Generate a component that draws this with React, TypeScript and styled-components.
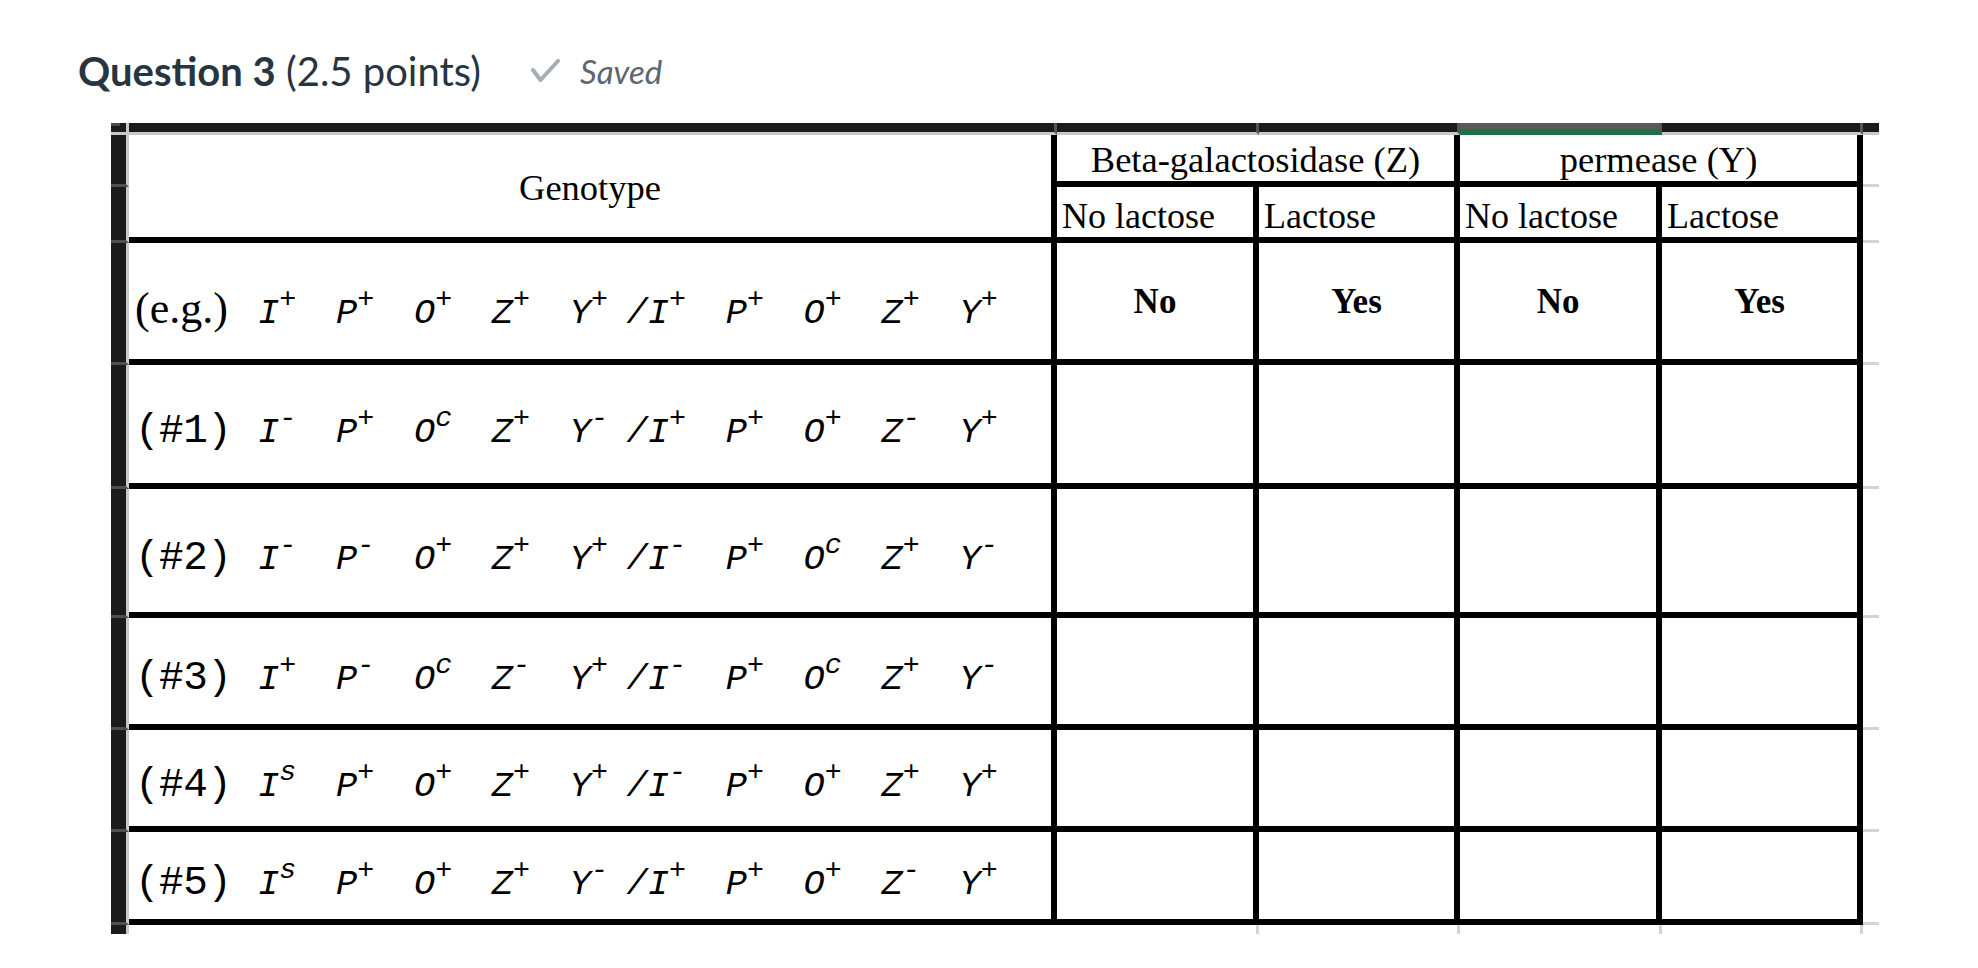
import React from "react";
import styled, { createGlobalStyle } from "styled-components";

const GlobalStyle = createGlobalStyle`
  html, body {
    margin: 0;
    padding: 0;
    background: #ffffff;
  }
  body {
    font-family: Lato, "Noto Sans", sans-serif;
    color: #273540;
  }
`;

const Page = styled.div`
  padding: 52px 0 40px 78px;
`;

const QuestionHeader = styled.header`
  display: flex;
  align-items: center;
  height: 38px;
`;

const Title = styled.h2`
  margin: 0;
  font-size: 40px;
  line-height: 38px;
  font-weight: 400;
  color: #273540;
`;

const Strong = styled.strong`
  font-weight: 700;
`;

const SavedStatus = styled.span`
  display: flex;
  align-items: center;
  gap: 20px;
  margin-left: 50px;
  font-size: 33px;
  font-style: italic;
  color: #5b6670;
`;

// ---- spreadsheet chrome ----

const Sheet = styled.div`
  margin: 33px 0 0 33px;
  display: grid;
  grid-template-columns: 18px auto;
  grid-template-rows: 12px auto;
  width: max-content;
`;

const Corner = styled.div`
  box-sizing: border-box;
  border-right: 3px solid #c9c9c9;
  border-bottom: 3px solid #c9c9c9;
  background: linear-gradient(#4a4a4a, #4a4a4a) 0 0 / 9px 3px no-repeat, #1b1b1b;
`;

const ColumnBar = styled.div`
  display: flex;
`;

const ColHead = styled.div<{ $w: number; $selected?: boolean; $last?: boolean }>`
  box-sizing: border-box;
  width: ${(p) => p.$w}px;
  height: 12px;
  background: ${(p) => (p.$selected ? "#5a5a5a" : "#1b1b1b")};
  border-bottom: ${(p) => (p.$selected ? "6px solid #1e7145" : "3px solid #c9c9c9")};
  border-right: ${(p) => (p.$last ? "none" : "3px solid #555555")};
`;

const RowBar = styled.div`
  display: flex;
  flex-direction: column;
`;

const RowHead = styled.div<{ $h: number; $last?: boolean }>`
  box-sizing: border-box;
  height: ${(p) => p.$h}px;
  background: #1b1b1b;
  border-right: 3px solid #c9c9c9;
  border-bottom: ${(p) => (p.$last ? "none" : "3px solid #505050")};
`;

// ---- the table itself ----

const Grid = styled.table`
  border-collapse: separate;
  border-spacing: 0;
  table-layout: fixed;
  width: 1750px;
  font-family: "Liberation Serif", "Times New Roman", serif;
  color: #000;
`;

const Cell = styled.td`
  box-sizing: border-box;
  padding: 0;
  border-right: 6px solid #000;
  border-bottom: 6px solid #000;
  vertical-align: middle;
`;

const HeadCell = styled(Cell).attrs({ as: "th" })`
  font-weight: 400;
  font-size: 36.5px;
  line-height: 1.1;
  text-align: center;
  padding-top: 5px;
`;

const SubHead = styled(HeadCell)`
  text-align: left;
  font-size: 36px;
  padding: 9px 0 0 5px;
`;

const Answer = styled(Cell)`
  font-weight: 700;
  font-size: 35px;
  text-align: center;
  padding-top: 2px;
`;

const Spill = styled.td<{ $line?: boolean }>`
  padding: 0;
  box-sizing: border-box;
  border-bottom: ${(p) => (p.$line ? "3px solid #d4d4d4" : "none")};
`;

const Tick = styled.td<{ $line?: boolean }>`
  padding: 0;
  box-sizing: border-box;
  border-right: ${(p) => (p.$line ? "3px solid #d4d4d4" : "none")};
`;

const GenoLine = styled.div`
  display: flex;
  align-items: baseline;
  padding: 14px 0 0 6px;
  white-space: pre;
`;

const Prefix = styled.span<{ $serif?: boolean }>`
  flex: none;
  width: 123px;
  font-family: ${(p) =>
    p.$serif ? '"Liberation Serif", "Times New Roman", serif' : '"Liberation Mono", "Courier New", monospace'};
  font-size: ${(p) => (p.$serif ? 44 : 41)}px;
  letter-spacing: ${(p) => (p.$serif ? 0 : -0.5)}px;
`;

const Genes = styled.span`
  font-family: "Liberation Mono", "Courier New", monospace;
  font-style: italic;
  font-size: 35.4px;
`;

const Sup = styled.span`
  font-size: 0.8em;
  letter-spacing: -2.8px;
  vertical-align: 0.55em;
  line-height: 0;
`;

type Gene = [string, string];

const parse = (s: string): Gene[] => s.split(" ").map((g) => [g[0], g.slice(1)] as Gene);

const rows = [
  { label: "(e.g.)", serif: true, left: "I+ P+ O+ Z+ Y+", right: "I+ P+ O+ Z+ Y+", h: 122, answers: ["No", "Yes", "No", "Yes"] },
  { label: "(#1)", left: "I- P+ Oc Z+ Y-", right: "I+ P+ O+ Z- Y+", h: 124 },
  { label: "(#2)", left: "I- P- O+ Z+ Y+", right: "I- P+ Oc Z+ Y-", h: 129 },
  { label: "(#3)", left: "I+ P- Oc Z- Y+", right: "I- P+ Oc Z+ Y-", h: 112 },
  { label: "(#4)", left: "Is P+ O+ Z+ Y+", right: "I- P+ O+ Z+ Y+", h: 102 },
  { label: "(#5)", left: "Is P+ O+ Z+ Y-", right: "I+ P+ O+ Z- Y+", h: 93 },
];

const cols = [928, 202, 201, 202, 201, 16];

function GeneSet({ genes }: { genes: Gene[] }) {
  return (
    <>
      {genes.map(([letter, sign], i) => (
        <React.Fragment key={i}>
          {i > 0 && "  "}
          {letter}
          <Sup>{sign}</Sup>
        </React.Fragment>
      ))}
    </>
  );
}

function Check() {
  return (
    <svg width="29" height="24" viewBox="0 0 29 24" fill="none">
      <path d="M2 11 L9.5 21 L27 2" stroke="#a4aeb6" strokeWidth="4" strokeLinecap="round" strokeLinejoin="round" />
    </svg>
  );
}

export default function App() {
  const rowHeights = [52, 56, ...rows.map((r) => r.h), 9];

  return (
    <Page>
      <GlobalStyle />
      <QuestionHeader>
        <Title>
          <Strong>Question 3</Strong> (2.5 points)
        </Title>
        <SavedStatus>
          <Check />
          Saved
        </SavedStatus>
      </QuestionHeader>

      <Sheet>
        <Corner />
        <ColumnBar>
          {cols.map((w, i) => (
            <ColHead key={i} $w={w} $selected={i === 3} $last={i === cols.length - 1} />
          ))}
        </ColumnBar>
        <RowBar>
          {rowHeights.map((h, i) => (
            <RowHead key={i} $h={h} $last={i === rowHeights.length - 1} />
          ))}
        </RowBar>

        <Grid>
          <colgroup>
            {cols.map((w, i) => (
              <col key={i} style={{ width: w }} />
            ))}
          </colgroup>
          <tbody>
            <tr style={{ height: 52 }}>
              <HeadCell rowSpan={2}>Genotype</HeadCell>
              <HeadCell colSpan={2}>Beta-galactosidase (Z)</HeadCell>
              <HeadCell colSpan={2}>permease (Y)</HeadCell>
              <Spill $line />
            </tr>
            <tr style={{ height: 56 }}>
              <SubHead>No lactose</SubHead>
              <SubHead>Lactose</SubHead>
              <SubHead>No lactose</SubHead>
              <SubHead>Lactose</SubHead>
              <Spill $line />
            </tr>
            {rows.map((r) => (
              <tr key={r.label} style={{ height: r.h }}>
                <Cell>
                  <GenoLine>
                    <Prefix $serif={r.serif}>{r.label}</Prefix>
                    <Genes>
                      <GeneSet genes={parse(r.left)} />
                      {" /"}
                      <GeneSet genes={parse(r.right)} />
                    </Genes>
                  </GenoLine>
                </Cell>
                {[0, 1, 2, 3].map((c) => (
                  <Answer key={c}>{r.answers ? r.answers[c] : ""}</Answer>
                ))}
                <Spill $line />
              </tr>
            ))}
            <tr style={{ height: 9 }}>
              {cols.map((_, i) => (
                <Tick key={i} $line={i > 0 && i < cols.length - 1} />
              ))}
            </tr>
          </tbody>
        </Grid>
      </Sheet>
    </Page>
  );
}
